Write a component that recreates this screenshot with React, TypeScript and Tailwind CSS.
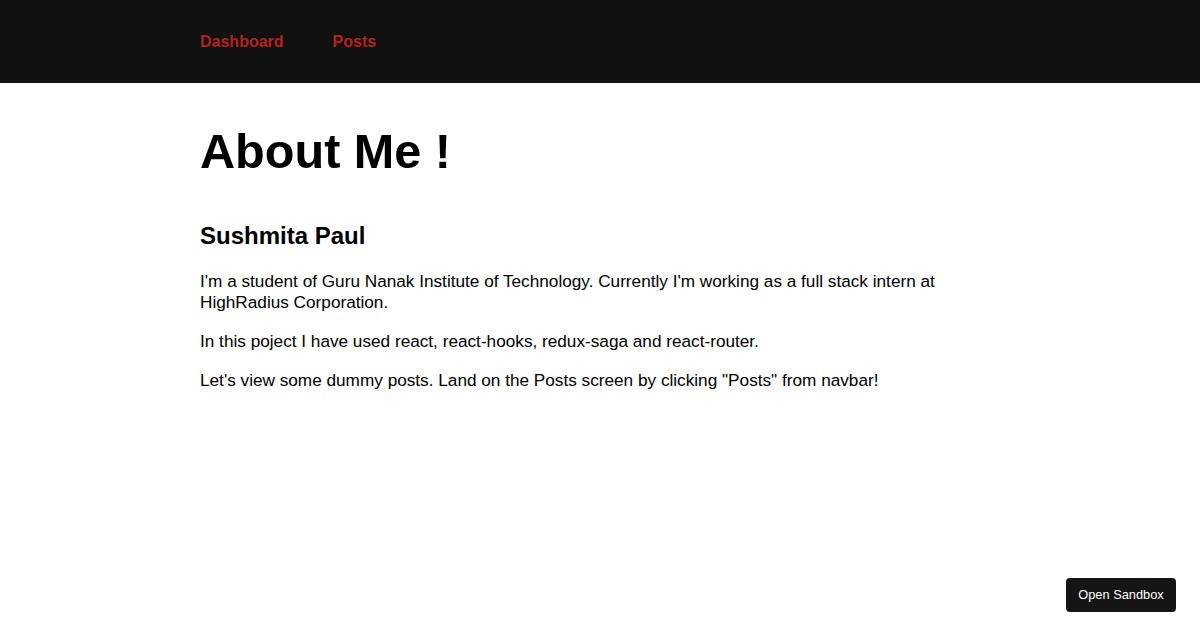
export default function App() {
  return (
    <div className="relative min-h-[630px] bg-white font-['Liberation_Sans',Arial,sans-serif] text-black">
      {/* Navbar */}
      <nav className="h-[83px] bg-[#111111]">
        <div className="mx-auto flex h-full w-[800px] items-center gap-[49px] pt-[1px]">
          <a className="text-base font-bold text-[#b42222]">Dashboard</a>
          <a className="text-base font-bold text-[#b42222]">Posts</a>
        </div>
      </nav>

      {/* Content */}
      <main className="mx-auto w-[800px] pt-[41px]">
        <h1 className="text-[48.6px] font-bold leading-[55px]">About Me !</h1>

        <h2 className="mt-[43px] text-[24px] font-bold leading-[28px]">
          Sushmita Paul
        </h2>

        <div className="mt-[21px] text-[17.2px] leading-[21px]">
          <p>
            I'm a student of Guru Nanak Institute of Technology. Currently I'm
            working as a full stack intern at HighRadius Corporation.
          </p>
          <p className="mt-[18px]">
            In this poject I have used react, react-hooks, redux-saga and
            react-router.
          </p>
          <p className="mt-[18px]">
            Let's view some dummy posts. Land on the Posts screen by clicking
            "Posts" from navbar!
          </p>
        </div>
      </main>

      {/* Sandbox button */}
      <button className="absolute bottom-[18px] right-[24px] flex h-[34px] w-[110px] items-center justify-center rounded-[4px] bg-[#151515] text-[12.8px] text-white">
        Open Sandbox
      </button>
    </div>
  );
}
